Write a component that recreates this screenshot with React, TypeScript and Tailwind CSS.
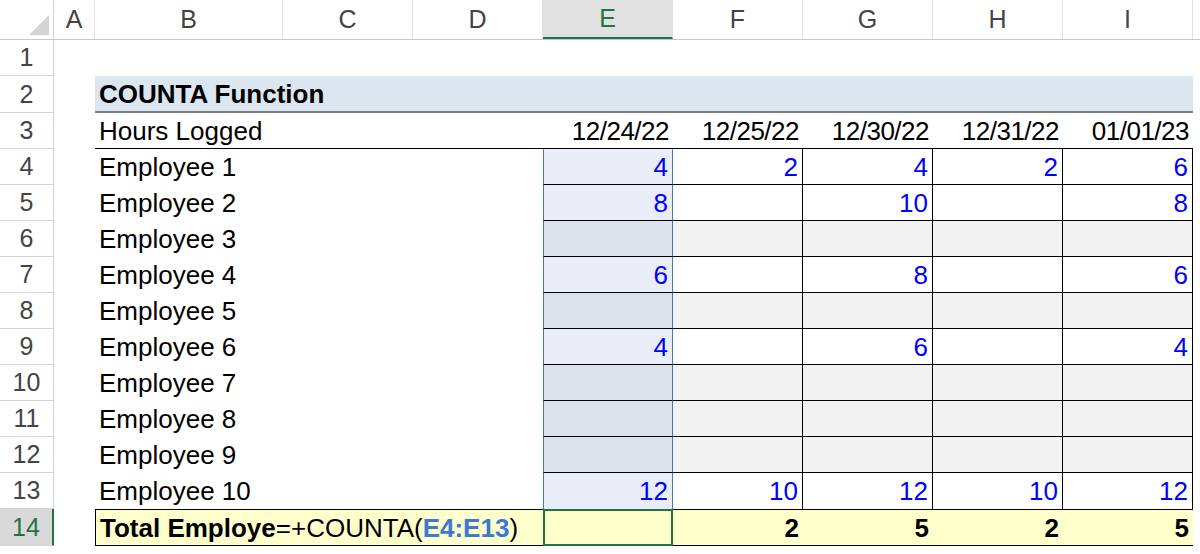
const cols = ["A", "B", "C", "D", "E", "F", "G", "H", "I"];
const dates = ["12/24/22", "12/25/22", "12/30/22", "12/31/22", "01/01/23"];
const data: (number | null)[][] = [
  [4, 2, 4, 2, 6],
  [8, null, 10, null, 8],
  [null, null, null, null, null],
  [6, null, 8, null, 6],
  [null, null, null, null, null],
  [4, null, 6, null, 4],
  [null, null, null, null, null],
  [null, null, null, null, null],
  [null, null, null, null, null],
  [12, 10, 12, 10, 12],
];

const grid = "grid grid-cols-[54px_41px_188px_130px_130px_130px_130px_130px_130px_130px_7px]";

function RowHead({ n, active }: { n: number; active?: boolean }) {
  return (
    <div
      className={
        "flex items-center justify-center border-b border-r border-[#d4d4d4] text-[25px] " +
        (active ? "bg-[#d9d9d9] text-[#217346] border-r-2 border-r-[#217346]" : "bg-white text-[#444]")
      }
    >
      {n}
    </div>
  );
}

export default function App() {
  return (
    <div
      className="w-[1200px] h-[554px] overflow-hidden bg-white text-[26px] leading-none text-black"
      style={{ fontFamily: '"Liberation Sans", Arial, sans-serif' }}
    >
      {/* column headers */}
      <div className={grid + " h-[40px] border-b border-[#c8c8c8] text-[#444]"}>
        <div className="flex items-end justify-end border-r border-[#d4d4d4] p-1">
          <div className="w-0 h-0 border-l-[20px] border-l-transparent border-b-[20px] border-b-[#d4d4d4]" />
        </div>
        {cols.map((c) => (
          <div
            key={c}
            className={
              "flex items-center justify-center border-r border-[#e1e1e1] text-[25px] " +
              (c === "E" ? "bg-[#e1e1e1] text-[#217346] border-b-2 border-b-[#217346]" : "")
            }
          >
            {c}
          </div>
        ))}
        <div />
      </div>

      {/* row 1 */}
      <div className={grid + " h-[36px]"}>
        <RowHead n={1} />
      </div>

      {/* row 2 */}
      <div className={grid + " h-[37px]"}>
        <RowHead n={2} />
        <div />
        <div className="col-span-8 bg-[#dce6f1] border-b-2 border-[#7f7f7f] flex items-center pl-1 font-bold">
          COUNTA Function
        </div>
      </div>

      {/* row 3 */}
      <div className={grid + " h-[36px]"}>
        <RowHead n={3} />
        <div />
        <div className="col-span-3 border-b border-black flex items-center pl-1">Hours Logged</div>
        {dates.map((d) => (
          <div key={d} className="border-b border-black flex items-center justify-end pr-1 tracking-[-0.5px]">
            {d}
          </div>
        ))}
      </div>

      {/* rows 4-13 */}
      {data.map((row, i) => {
        const empty = row.every((v) => v === null);
        const last = i === data.length - 1;
        return (
          <div key={i} className={grid + " h-[36px]"}>
            <RowHead n={i + 4} />
            <div />
            <div className="col-span-3 flex items-center pl-1">Employee {i + 1}</div>
            {row.map((v, j) => (
              <div
                key={j}
                className={
                  "flex items-center justify-end pr-1 text-[#0000ff] " +
                  (last ? "" : "border-b border-b-black ") +
                  (j === 0
                    ? "border-x border-x-[#4472c4] " + (empty ? "bg-[#dde3ec]" : "bg-[#e8edf7]")
                    : "border-r border-r-black " + (empty ? "bg-[#f2f2f2]" : "bg-white"))
                }
              >
                {v}
              </div>
            ))}
          </div>
        );
      })}

      {/* row 14 */}
      <div className={grid + " h-[37px]"}>
        <RowHead n={14} active />
        <div />
        <div className="col-span-3 bg-[#ffffcc] border border-black border-r-0 flex items-center pl-1 font-bold whitespace-nowrap relative z-10">
          Total Employe
          <span className="font-normal">=+COUNTA(</span>
          <span className="font-bold text-[#3c78d8]">E4:E13</span>
          <span className="font-normal">)</span>
        </div>
        <div className="bg-[#ffffcc] border-2 border-[#217346]" />
        {[2, 5, 2, 5].map((v, j) => (
          <div key={j} className="bg-[#ffffcc] border-y border-black flex items-center justify-end pr-1 font-bold">
            {v}
          </div>
        ))}
      </div>
    </div>
  );
}
